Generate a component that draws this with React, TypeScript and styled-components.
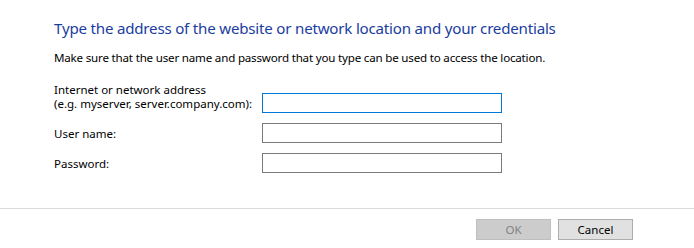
import React from 'react';
import { createGlobalStyle, styled } from 'styled-components';

const GlobalStyle = createGlobalStyle`
  html, body {
    margin: 0;
    padding: 0;
    background: #ffffff;
  }
  body {
    font-family: 'Noto Sans', 'Open Sans', sans-serif;
    color: #000000;
  }
`;

const fields = [
  { id: 'address', label: ['Internet or network address', '(e.g. myserver, server.company.com):'], focused: true },
  { id: 'user', label: ['User name:'], focused: false },
  { id: 'password', label: ['Password:'], focused: false },
];

const App = () => {
  return (
    <>
      <GlobalStyle />
      <Dialog>
        <Content>
          <Title>Type the address of the website or network location and your credentials</Title>
          <Hint>Make sure that the user name and password that you type can be used to access the location.</Hint>
          <Form>
            {fields.map(f => (
              <React.Fragment key={f.id}>
                <Label htmlFor={f.id}>
                  {f.label.map(line => (
                    <span key={line}>{line}</span>
                  ))}
                </Label>
                <Input id={f.id} type={f.id === 'password' ? 'password' : 'text'} $focused={f.focused} />
              </React.Fragment>
            ))}
          </Form>
        </Content>
        <Footer>
          <Button disabled>OK</Button>
          <Button>Cancel</Button>
        </Footer>
      </Dialog>
    </>
  );
};

export default App;

const Dialog = styled.div`
  width: 694px;
  height: 248px;
  display: flex;
  flex-direction: column;
  background: #ffffff;
`;

const Content = styled.div`
  flex: 1;
  padding: 18px 0 0 54px;
`;

const Title = styled.h1`
  margin: 0;
  font-size: 15.1px;
  font-weight: 400;
  line-height: 20px;
  color: #1a3d9f;
  letter-spacing: -0.2px;
`;

const Hint = styled.p`
  margin: 12px 0 0;
  font-size: 11.6px;
  line-height: 15px;
  letter-spacing: -0.2px;
`;

const Form = styled.div`
  display: grid;
  grid-template-columns: 208px 240px;
  row-gap: 10px;
  margin-top: 18px;
  align-items: end;
`;

const Label = styled.label`
  display: flex;
  flex-direction: column;
  font-size: 11.5px;
  line-height: 14px;
  padding-bottom: 2px;
`;

const Input = styled.input<{ $focused: boolean }>`
  box-sizing: border-box;
  width: 240px;
  height: 20px;
  margin: 0;
  padding: 0 4px;
  border: 1px solid ${props => (props.$focused ? '#0078d7' : '#7a7a7a')};
  outline: none;
  background: #ffffff;
  font: inherit;
  font-size: 12px;
`;

const Footer = styled.div`
  height: 40px;
  box-sizing: border-box;
  border-top: 1px solid #dcdcdc;
  display: flex;
  justify-content: flex-end;
  align-items: flex-start;
  gap: 7px;
  padding: 10px 61px 0 0;
`;

const Button = styled.button`
  box-sizing: border-box;
  width: 75px;
  height: 21px;
  margin: 0;
  padding: 0;
  border: 1px solid #adadad;
  background: #e1e1e1;
  color: #000000;
  font-family: inherit;
  font-size: 11.5px;
  line-height: 19px;

  &:disabled {
    border-color: #bfbfbf;
    background: #cccccc;
    color: #838383;
  }
`;
